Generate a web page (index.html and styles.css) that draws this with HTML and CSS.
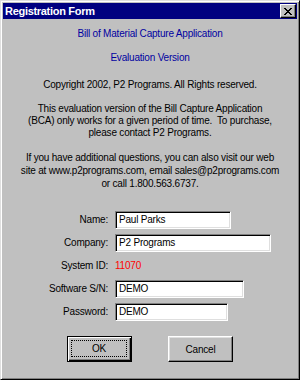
FILE: index.html
```html
<!DOCTYPE html>
<html>
<head>
<meta charset="utf-8">
<title>Registration Form</title>
<link rel="stylesheet" href="styles.css">
</head>
<body>
<div class="window">
  <div class="titlebar">
    <span class="title">Registration Form</span>
    <button class="close" aria-label="Close">
      <svg width="8" height="7" viewBox="0 0 8 7"><path d="M0 0h2v1h1v1h2v-1h1v-1h2v1h-1v1h-1v1h-1v1h1v1h1v1h1v1h-2v-1h-1v-1h-2v1h-1v1h-2v-1h1v-1h1v-1h1v-1h-1v-1h-1v-1h-1z" fill="#000"/></svg>
    </button>
  </div>
  <div class="content">
    <p class="blue l1">Bill of Material Capture Application</p>
    <p class="blue l2">Evaluation Version</p>
    <p class="l3">Copyright 2002, P2 Programs. All Rights reserved.</p>
    <p class="para p1">This evaluation version of the Bill Capture Application<br>(BCA) only works for a given period of time.&nbsp; To purchase,<br>please contact P2 Programs.</p>
    <p class="para p2">If you have additional questions, you can also visit our web<br>site at www.p2programs.com, email sales@p2programs.com<br>or call 1.800.563.6737.</p>
    <div class="form">
      <label class="lbl">Name:</label>
      <div class="field w-name">Paul Parks</div>
      <label class="lbl">Company:</label>
      <div class="field w-company">P2 Programs</div>
      <label class="lbl">System ID:</label>
      <div class="sysid">11070</div>
      <label class="lbl">Software S/N:</label>
      <div class="field w-sn">DEMO</div>
      <label class="lbl">Password:</label>
      <div class="field w-pw">DEMO</div>
    </div>
    <div class="buttons">
      <button class="btn default"><span class="focus">OK</span></button>
      <button class="btn"><span class="nofocus">Cancel</span></button>
    </div>
  </div>
</div>
</body>
</html>
```
FILE: styles.css
```css
html, body {
  margin: 0;
  padding: 0;
  background: #c0c0c0;
}
body {
  font-family: "Liberation Sans", Arial, sans-serif;
  font-size: 10px;
  letter-spacing: -0.2px;
  color: #000;
}
.window {
  width: 300px;
  height: 380px;
  box-sizing: border-box;
  background: #c0c0c0;
  border: 1px solid;
  border-color: #dfdfdf #000 #000 #dfdfdf;
  box-shadow: inset 1px 1px #fff, inset -1px -1px #808080;
  padding: 2px;
  display: flex;
  flex-direction: column;
}
.titlebar {
  height: 16px;
  background: #000080;
  display: flex;
  align-items: center;
  justify-content: space-between;
  padding: 0 1px 0 2px;
}
.title {
  color: #fff;
  font-weight: bold;
  font-size: 11px;
  letter-spacing: -0.3px;
  white-space: nowrap;
}
.close {
  width: 16px;
  height: 14px;
  padding: 0;
  margin: 0;
  background: #c0c0c0;
  border: 1px solid;
  border-color: #fff #000 #000 #fff;
  box-shadow: inset -1px -1px #808080;
  display: flex;
  align-items: center;
  justify-content: center;
  box-sizing: border-box;
}
.close svg {
  display: block;
  margin-left: -1px;
}
.content {
  flex: 1;
  display: flex;
  flex-direction: column;
  align-items: center;
}
p {
  margin: 0;
  text-align: center;
  white-space: nowrap;
  line-height: 13px;
  color: #000;
}
.blue {
  color: #0000a0;
}
.l1 { margin-top: 8px; }
.l2 { margin-top: 11px; }
.l3 { margin-top: 14px; }
.p1 { margin-top: 12px; line-height: 12px; }
.p2 { margin-top: 12px; line-height: 13px; }
.form {
  align-self: stretch;
  margin-top: 21px;
  display: grid;
  grid-template-columns: 105px auto;
  column-gap: 7px;
  row-gap: 5px;
  align-items: center;
  justify-items: start;
}
.lbl {
  justify-self: end;
  white-space: nowrap;
  line-height: 18px;
}
.field {
  height: 18px;
  box-sizing: border-box;
  background: #fff;
  border: 1px solid;
  border-color: #808080 #fff #fff #808080;
  box-shadow: inset 1px 1px #000, inset -1px -1px #dfdfdf;
  padding: 0 3px;
  line-height: 16px;
  white-space: nowrap;
}
.w-name { width: 116px; }
.w-company { width: 156px; }
.w-sn { width: 129px; }
.w-pw { width: 113px; }
.sysid {
  color: #f00;
  line-height: 18px;
}
.buttons {
  margin-top: 15px;
  display: flex;
  gap: 36px;
  justify-content: center;
}
.btn {
  width: 65px;
  height: 26px;
  box-sizing: border-box;
  padding: 0;
  margin: 0;
  font-family: "Liberation Sans", Arial, sans-serif;
  font-size: 10px;
  letter-spacing: -0.2px;
  color: #000;
  background: #c0c0c0;
  border: 1px solid;
  border-color: #fff #000 #000 #fff;
  box-shadow: inset -1px -1px #808080, inset 1px 1px #dfdfdf;
  display: flex;
  align-items: stretch;
  justify-content: stretch;
}
.btn.default {
  border: 1px solid #000;
  box-shadow: inset 1px 1px #fff, inset -1px -1px #000, inset -2px -2px #808080;
}
.focus, .nofocus {
  flex: 1;
  display: flex;
  align-items: center;
  justify-content: center;
  margin: 3px;
}
.focus {
  border: 1px dotted #000;
  margin: 3px 4px 4px 3px;
}
```
